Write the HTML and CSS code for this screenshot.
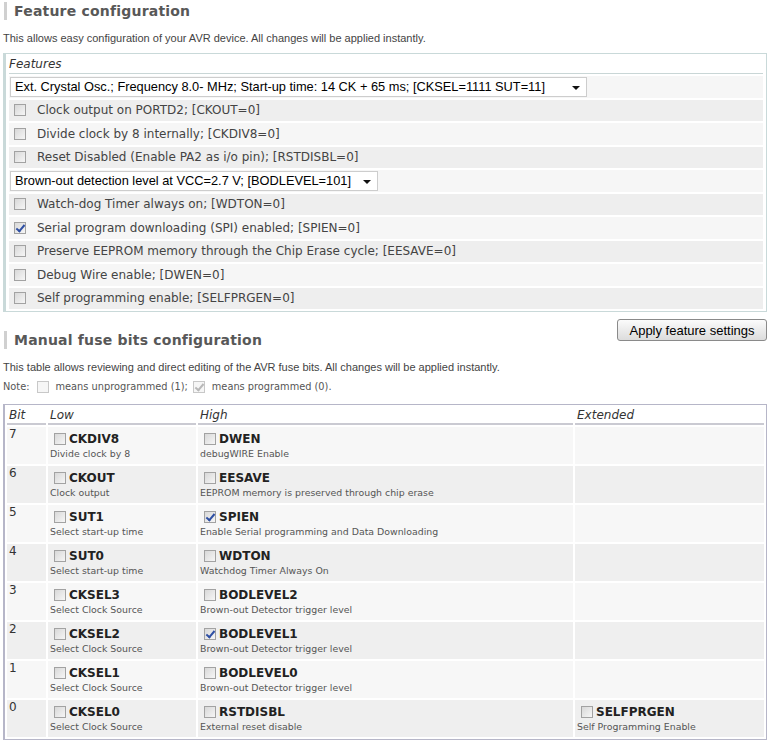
FILE: index.html
```html
<!DOCTYPE html>
<html lang="en">
<head>
  <meta charset="UTF-8">
  <title>AVR Fuse Configuration</title>
  <link rel="stylesheet" href="styles.css">
</head>
<body>

  <h2 class="section-title">Feature configuration</h2>
  <p class="hint">This allows easy configuration of your AVR device. All changes will be applied instantly.</p>

  <!-- Features -->
  <div class="features">
    <div class="features-head">Features</div>
    <div class="feature-row select-row">
      <span class="select-wrap sel-clock">
        <select>
          <option>Ext. Crystal Osc.; Frequency 8.0- MHz; Start-up time: 14 CK + 65 ms; [CKSEL=1111 SUT=11]</option>
        </select>
      </span>
    </div>
    <label class="feature-row"><input type="checkbox" class="cb">Clock output on PORTD2; [CKOUT=0]</label>
    <label class="feature-row"><input type="checkbox" class="cb">Divide clock by 8 internally; [CKDIV8=0]</label>
    <label class="feature-row"><input type="checkbox" class="cb">Reset Disabled (Enable PA2 as i/o pin); [RSTDISBL=0]</label>
    <div class="feature-row select-row">
      <span class="select-wrap sel-bod">
        <select>
          <option>Brown-out detection level at VCC=2.7 V; [BODLEVEL=101]</option>
        </select>
      </span>
    </div>
    <label class="feature-row"><input type="checkbox" class="cb">Watch-dog Timer always on; [WDTON=0]</label>
    <label class="feature-row"><input type="checkbox" class="cb" checked>Serial program downloading (SPI) enabled; [SPIEN=0]</label>
    <label class="feature-row"><input type="checkbox" class="cb">Preserve EEPROM memory through the Chip Erase cycle; [EESAVE=0]</label>
    <label class="feature-row"><input type="checkbox" class="cb">Debug Wire enable; [DWEN=0]</label>
    <label class="feature-row"><input type="checkbox" class="cb">Self programming enable; [SELFPRGEN=0]</label>
  </div>

  <button class="apply">Apply feature settings</button>

  <h2 class="section-title second">Manual fuse bits configuration</h2>
  <p class="hint hint-fuse">This table allows reviewing and direct editing of the AVR fuse bits. All changes will be applied instantly.</p>
  <p class="note">Note: <input type="checkbox" class="cb cb-off" disabled> means unprogrammed (1); <input type="checkbox" class="cb cb-off" checked disabled> means programmed (0).</p>

  <!-- Fuse bits -->
  <table class="fuses">
    <thead>
      <tr>
        <th class="col-bit">Bit</th>
        <th class="col-low">Low</th>
        <th class="col-high">High</th>
        <th class="col-ext">Extended</th>
      </tr>
    </thead>
    <tbody>
      <tr>
        <td class="bit">7</td>
        <td><label class="fuse"><input type="checkbox" class="cb">CKDIV8</label><div class="desc">Divide clock by 8</div></td>
        <td><label class="fuse"><input type="checkbox" class="cb">DWEN</label><div class="desc">debugWIRE Enable</div></td>
        <td></td>
      </tr>
      <tr>
        <td class="bit">6</td>
        <td><label class="fuse"><input type="checkbox" class="cb">CKOUT</label><div class="desc">Clock output</div></td>
        <td><label class="fuse"><input type="checkbox" class="cb">EESAVE</label><div class="desc">EEPROM memory is preserved through chip erase</div></td>
        <td></td>
      </tr>
      <tr>
        <td class="bit">5</td>
        <td><label class="fuse"><input type="checkbox" class="cb">SUT1</label><div class="desc">Select start-up time</div></td>
        <td><label class="fuse"><input type="checkbox" class="cb" checked>SPIEN</label><div class="desc">Enable Serial programming and Data Downloading</div></td>
        <td></td>
      </tr>
      <tr>
        <td class="bit">4</td>
        <td><label class="fuse"><input type="checkbox" class="cb">SUT0</label><div class="desc">Select start-up time</div></td>
        <td><label class="fuse"><input type="checkbox" class="cb">WDTON</label><div class="desc">Watchdog Timer Always On</div></td>
        <td></td>
      </tr>
      <tr>
        <td class="bit">3</td>
        <td><label class="fuse"><input type="checkbox" class="cb">CKSEL3</label><div class="desc">Select Clock Source</div></td>
        <td><label class="fuse"><input type="checkbox" class="cb">BODLEVEL2</label><div class="desc">Brown-out Detector trigger level</div></td>
        <td></td>
      </tr>
      <tr>
        <td class="bit">2</td>
        <td><label class="fuse"><input type="checkbox" class="cb">CKSEL2</label><div class="desc">Select Clock Source</div></td>
        <td><label class="fuse"><input type="checkbox" class="cb" checked>BODLEVEL1</label><div class="desc">Brown-out Detector trigger level</div></td>
        <td></td>
      </tr>
      <tr>
        <td class="bit">1</td>
        <td><label class="fuse"><input type="checkbox" class="cb">CKSEL1</label><div class="desc">Select Clock Source</div></td>
        <td><label class="fuse"><input type="checkbox" class="cb">BODLEVEL0</label><div class="desc">Brown-out Detector trigger level</div></td>
        <td></td>
      </tr>
      <tr>
        <td class="bit">0</td>
        <td><label class="fuse"><input type="checkbox" class="cb">CKSEL0</label><div class="desc">Select Clock Source</div></td>
        <td><label class="fuse"><input type="checkbox" class="cb">RSTDISBL</label><div class="desc">External reset disable</div></td>
        <td><label class="fuse"><input type="checkbox" class="cb">SELFPRGEN</label><div class="desc">Self Programming Enable</div></td>
      </tr>
    </tbody>
  </table>

</body>
</html>
```

FILE: styles.css
```css
* {
  box-sizing: border-box;
}

body {
  margin: 0;
  padding: 2px 7px 0 3px;
  font-family: "DejaVu Sans", Verdana, sans-serif;
  font-size: 12px;
  color: #333;
  background: #fff;
}

.section-title {
  margin: 0 0 0 1px;
  padding-left: 7px;
  border-left: 3px solid #d0d0d0;
  font-size: 14px;
  line-height: 18px;
  font-weight: bold;
  color: #585858;
  letter-spacing: 0.2px;
}

.section-title.second {
  margin-top: 19px;
}

.hint {
  margin: 12px 0 9px;
  font-family: "Liberation Sans", Arial, sans-serif;
  font-size: 11px;
  line-height: 12px;
  color: #444;
}

.hint-fuse {
  margin-bottom: 7px;
}

.note {
  margin: 0 0 10px;
  font-size: 9.8px;
  line-height: 14px;
  color: #555;
  display: flex;
  align-items: center;
}

.note .cb {
  margin: 0 7px;
}

.note .cb:checked {
  margin-left: 5px;
}

/* checkbox */
.cb {
  appearance: none;
  -webkit-appearance: none;
  position: relative;
  flex: none;
  width: 12px;
  height: 12px;
  margin: 0;
  border: 1px solid #a2a2a2;
  background: linear-gradient(135deg, #d8d8d8, #f6f6f6);
}

.cb:checked::after {
  content: "";
  position: absolute;
  left: 3px;
  top: 0px;
  width: 3px;
  height: 7px;
  border: solid #2e4fa3;
  border-width: 0 2px 2px 0;
  transform: rotate(40deg);
}

.cb-off {
  border-color: #c8c8c8;
  background: #f6f6f6;
}

.cb-off:checked::after {
  border-color: #b8b8b8;
}

/* features box */
.features {
  display: flex;
  flex-direction: column;
  gap: 2px;
  border: 1px solid #c9d9d9;
  border-left-width: 3px;
  padding: 0 3px 2px;
}

.features-head {
  height: 20px;
  line-height: 21px;
  padding-left: 0;
  font-style: italic;
  color: #333;
  border-bottom: 1px solid #c9d6d6;
}

.feature-row {
  display: flex;
  align-items: center;
  height: 21.5px;
  padding-left: 5px;
  background: #eeeeee;
  color: #444;
}

.feature-row:nth-child(even) {
  background: #f6f6f6;
}

.feature-row .cb {
  margin-right: 11px;
}

.select-row {
  padding-left: 1px;
}

.select-wrap {
  position: relative;
  display: inline-block;
  height: 20px;
}

.select-wrap::after {
  content: "";
  position: absolute;
  right: 7px;
  top: 9px;
  border-left: 4px solid transparent;
  border-right: 4px solid transparent;
  border-top: 4px solid #111;
  pointer-events: none;
}

.select-wrap select {
  appearance: none;
  -webkit-appearance: none;
  width: 100%;
  height: 20px;
  margin: 0;
  padding: 0 0 0 4px;
  border: 1px solid #cdcdcd;
  border-radius: 0;
  background: #fff;
  font-family: "Liberation Sans", Arial, sans-serif;
  font-size: 12.8px;
  color: #000;
}

.sel-clock {
  width: 577px;
}

.sel-bod {
  width: 368px;
}

.apply {
  float: right;
  margin-top: 7px;
  width: 150px;
  height: 22px;
  padding: 0;
  border: 1px solid #8a8a8a;
  border-radius: 3px;
  background: linear-gradient(#fbfbfb, #dcdcdc);
  font-family: "Liberation Sans", Arial, sans-serif;
  font-size: 13px;
  color: #000;
}

/* fuse bits table */
.fuses {
  width: 764px;
  table-layout: fixed;
  border-collapse: separate;
  border-spacing: 2px;
  border: 1px solid #b6b6c8;
  border-left-width: 2px;
}

.fuses th {
  height: 18px;
  padding: 0 2px;
  text-align: left;
  font-weight: normal;
  font-style: italic;
  line-height: 16px;
  color: #333;
  border-bottom: 2px solid #cacad2;
}

.col-bit { width: 39px; }
.col-low { width: 148px; }
.col-high { width: 375px; }
.col-ext { width: 189px; }

.fuses td {
  height: 37px;
  padding: 0 2px;
  vertical-align: top;
  background: #f7f7f7;
}

.fuses tbody tr:nth-child(even) td {
  background: #efefef;
}

.bit {
  line-height: 14px;
  color: #333;
}

.fuse {
  display: flex;
  align-items: center;
  gap: 3px;
  height: 16px;
  margin-top: 4px;
  padding-left: 4px;
  font-weight: bold;
  color: #222;
}

.desc {
  font-size: 9.4px;
  line-height: 14px;
  color: #555;
}
```
